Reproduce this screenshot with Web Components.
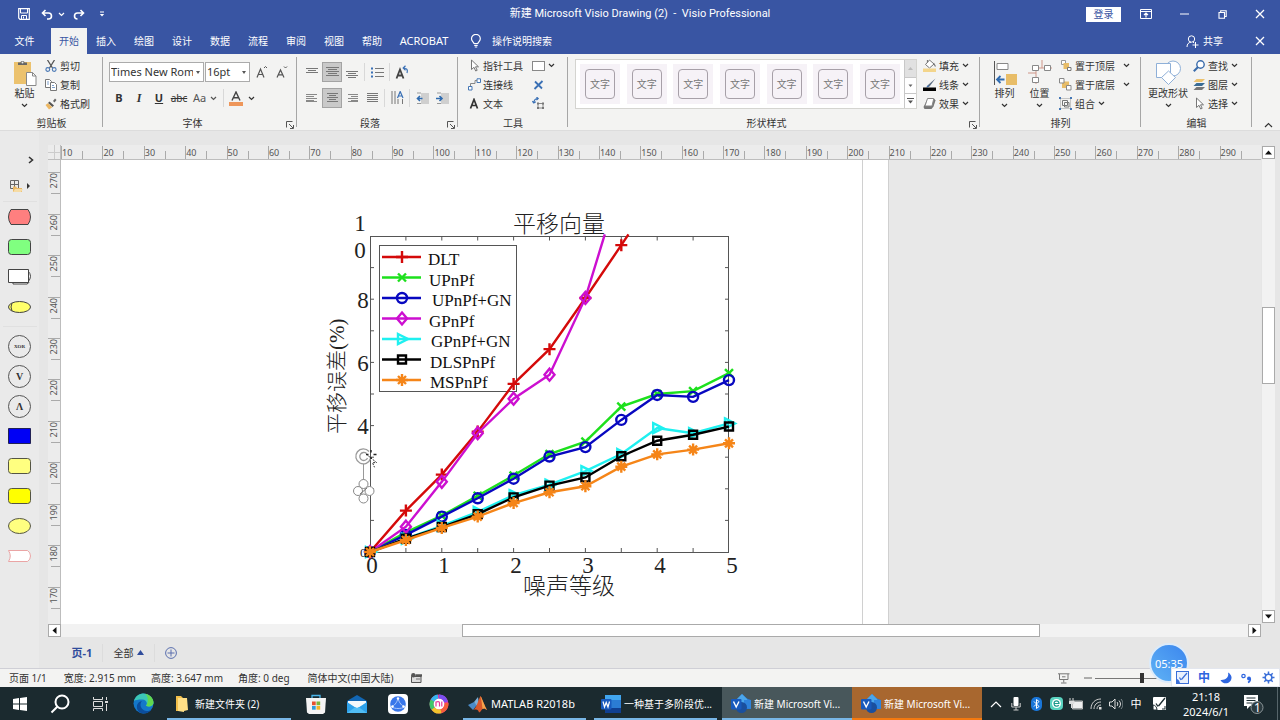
<!DOCTYPE html>
<html lang="zh-CN">
<head>
<meta charset="utf-8">
<title>新建 Microsoft Visio Drawing (2) - Visio Professional</title>
<style>
html,body{margin:0;height:100%}
body{font:10px/14px "Noto Sans","Noto Sans CJK SC",sans-serif;color:#333;overflow:hidden}
</style>
</head>
<body>
<visio-app></visio-app>
<script>
const BASE = `*{box-sizing:border-box}
button{font:inherit;color:inherit;background:none;border:0;padding:0;margin:0;display:flex;align-items:center;justify-content:center;white-space:nowrap}
svg{display:block;flex:none}`;

function define(name, css, render) {
  customElements.define(name, class extends HTMLElement {
    connectedCallback() {
      if (this.shadowRoot) return;
      const root = this.attachShadow({ mode: 'open' });
      root.innerHTML = `<style>${BASE}${css}</style>${render(this)}`;
    }
  });
}

const hatch = (x1, x2, ys, c = '#777') => ys.map((y, i) => {
  const [a, b] = Array.isArray(x1) ? x1[i % x1.length] : [x1, x2];
  return `<path d="M${a} ${y}H${b}" stroke="${c}"/>`;
}).join('');

/* name: [width, height, markup] */
const ICONS = {
  chev: [7, 5, '<path d="M1 1l2.5 2.5L6 1" fill="none" stroke="currentColor" stroke-width="1.2"/>'],
  up: [9, 6, '<path d="M1 5l3.5-3.5L8 5" fill="none" stroke="currentColor" stroke-width="1.2"/>'],
  save: [12, 12, '<path d="M.7.7h10.6v10.6H2L.7 10z" fill="none" stroke="#fff" stroke-width="1.2"/><path d="M2.5 1v4h7V1M3.5 11V7.5h5V11M5.5 8.5v2" fill="none" stroke="#fff"/>'],
  undo: [13, 11, '<path d="M4.5 1L1.5 4l3 3M2 4h5.5a3 3 0 0 1 0 6H6" fill="none" stroke="#fff" stroke-width="1.6"/>'],
  redo: [13, 11, '<path d="M8.500 1l3 3-3 3M11 4H5.500a3 3 0 0 0 0 6" fill="none" stroke="#fff" stroke-width="1.6"/>'],
  more: [6, 6, '<path d="M1 1h4" stroke="#fff"/><path d="M.8 3h4.400L3 5.500z" fill="#fff"/>'],
  ribbonOpt: [12, 10, '<path d="M.5.5h11v9H.5zM.5 2.500h11" fill="none" stroke="#fff"/><path d="M6 8.500V4M4 6l2-2 2 2" fill="none" stroke="#fff" stroke-width="1.200"/>'],
  min: [9, 2, '<path d="M0 1h9" stroke="#fff"/>'],
  restore: [9, 9, '<path d="M1 2.500h5.500V8.200H1zM2.700 2.500V.8H8.200v5.700H6.500" fill="none" stroke="#fff" stroke-width="1.100"/>'],
  close: [10, 10, '<path d="M1 1l8 8M9 1L1 9" stroke="#fff" stroke-width="1.300"/>'],
  bulb: [12, 14, '<path d="M4 9.500C3.500 8 1.500 7 1.500 4.800a4.300 4.300 0 0 1 8.800 0C10.300 7 8.300 8 7.800 9.500zM4.200 11.300h3.500M4.800 13h2.400" fill="none" stroke="#fff" stroke-width="1.200"/>'],
  share: [13, 13, '<circle cx="5.500" cy="4" r="3.200" fill="none" stroke="#fff"/><path d="M1 12c0-3 1.500-4.500 4-4.800M7 7.200l1.200.8M6.500 10h6M9.500 7v6" fill="none" stroke="#fff"/>'],
  paste: [24, 26, '<rect x="1" y="2" width="17" height="22" fill="#ecc26e"/><path d="M5 5V2.500h2.500C7.500.5 11.500.5 11.500 2.500H14V5z" fill="#666"/><circle cx="9.500" cy="2.500" r="1" fill="#eee"/><path d="M13.500 12.500h6l3.500 3.500v9.500h-9.500z" fill="#fff" stroke="#888"/><path d="M19.500 12.500V16H23" fill="none" stroke="#888"/>'],
  cut: [12, 12, '<path d="M2.500 0l5 8M9.500 0l-5 8" stroke="#555" stroke-width="1.300"/><circle cx="2.800" cy="9.500" r="1.900" fill="none" stroke="#4a78b5" stroke-width="1.100"/><circle cx="9.200" cy="9.500" r="1.900" fill="none" stroke="#4a78b5" stroke-width="1.100"/>'],
  copy: [12, 12, '<path d="M.5.5h4l2 2v6h-6z" fill="#fff" stroke="#777"/><path d="M5.500 3.500h4l2 2v6h-6z" fill="#fff" stroke="#777"/><path d="M2 3h2M2 5h2M7 6.500h2M7 8.500h3" stroke="#5b87bd" stroke-width=".8"/>'],
  brush: [12, 12, '<path d="M8 3l2-2.500L11.500 2 9.500 4.500z" fill="#666"/><path d="M4.500 3.500L9 7.500 7.500 9 3 5z" fill="#555"/><path d="M2.800 5.200l4.600 4L4 11.500.5 7z" fill="#ecb763"/>'],
  growA: [12, 14, '<path d="M1 12.500L4.500 4 8 12.500M2.300 9.500h4.400" fill="none" stroke="#555" stroke-width="1.200"/><path d="M8 3l1.500-1.500L11 3" fill="none" stroke="#555"/>'],
  shrinkA: [12, 14, '<path d="M1 12.500L4.500 5 8 12.500M2.300 9.800h4.400" fill="none" stroke="#555" stroke-width="1.200"/><path d="M8 1.500L9.500 3 11 1.500" fill="none" stroke="#555"/>'],
  colorA: [14, 15, '<path d="M3 9.500L7 1l4 8.500M4.500 6.700h5" fill="none" stroke="#444" stroke-width="1.400"/><rect x="0" y="11" width="14" height="4" fill="#ee965a"/>'],
  alT: [13, 13, hatch([[0, 12], [2, 10]], 0, [2.5, 4.5, 6.5], '#777')],
  alM: [13, 13, hatch([[0, 13], [2, 11]], 0, [1.5, 3.5, 5.5, 7.5, 9.5], '#777')],
  alB: [13, 13, hatch([[0, 12], [2, 10]], 0, [5.5, 7.5, 9.5, 11.5], '#777')],
  alL: [13, 13, hatch([[0, 11], [0, 8]], 0, [2.5, 4.5, 6.5, 8.5, 9.5], '#888')],
  alC: [13, 13, hatch([[1, 12], [3, 10]], 0, [1.5, 3.5, 5.5, 7.5, 9.5], '#777')],
  alR: [13, 13, hatch([[2, 12], [5, 12]], 0, [2.5, 4.5, 6.5, 8.5, 9.5], '#888')],
  alJ: [13, 13, hatch(1, 12, [1.5, 3.5, 5.5, 7.5, 9.5], '#777')],
  bullets: [13, 13, hatch(4, 13, [2.5, 6.5, 10.5]) + '<path d="M0 2.500h2M0 6.500h2M0 10.500h2" stroke="#3a70b5" stroke-width="1.800"/>'],
  rotA: [14, 15, '<path d="M1.500 13.500L5 4.500l3.500 9M2.800 10.500h4.400" fill="none" stroke="#444" stroke-width="1.800"/><path d="M12 8c1-3 0-5-3.500-5M10.500.8L8.200 3l2.300 2.200" fill="none" stroke="#3a70b5" stroke-width="1.200"/>'],
  vertA: [13, 14, '<path d="M1 0v13M4 0v13M7 8v5M11.500 8v5" stroke="#777"/><path d="M6.500 7L9.200.5 12 7M7.500 5h3.500" fill="none" stroke="#3a70b5" stroke-width="1.200"/>'],
  outdent: [13, 12, '<rect x="5" y="1" width="8" height="11" fill="#cfcfcf"/><path d="M1 1h4M1 11.500h4" stroke="#999"/><path d="M6.500 6.500h-5M4 4L1.500 6.500 4 9" fill="none" stroke="#2f6bb0" stroke-width="1.600"/>'],
  indent: [13, 12, '<rect x="5" y="1" width="8" height="11" fill="#cfcfcf"/><path d="M1 1h4M1 11.500h4" stroke="#999"/><path d="M0 6.500h5.500M3.500 4L6 6.500 3.500 9" fill="none" stroke="#2f6bb0" stroke-width="1.600"/>'],
  pointer: [12, 13, '<path d="M3.500 1v9.500L6 8.300l1.700 3.700 1.500-.7L7.500 7.800h3z" fill="#fff" stroke="#777"/>'],
  connector: [13, 13, '<path d="M.5 8.500h3.500v3.500H.5zM9 .8h3.500v3.700H9z" fill="#fff" stroke="#4577b5"/><path d="M2.500 8V5.500h4.500V2.500h2" fill="none" stroke="#888"/>'],
  bigA: [12, 12, '<path d="M2.500 10.500L6 1.500l3.500 9M3.800 7.500h4.400" fill="none" stroke="#333" stroke-width="1.700"/>'],
  rect: [13, 10, '<rect x=".5" y=".5" width="12" height="9" fill="#fff" stroke="#888"/>'],
  cross: [13, 10, '<path d="M3 1.500l7 7M10.500 1l-8 8" stroke="#3a70b5" stroke-width="1.800"/>'],
  cropRot: [13, 13, '<path d="M6 6.500h5V11H6z" fill="none" stroke="#888"/><path d="M5 5.500h2v2H5zM10 5.500h2v2h-2zM5 10h2v2H5zM10 10h2v2h-2z" fill="#777"/><path d="M6 1.500C3.500 1.500 1.800 3 1.800 6M.3 4.200L1.800 6l2-1.300M4.500 0L6.200 1.500 4.500 3.200" fill="none" stroke="#3a70b5" stroke-width="1.200"/>'],
  fill: [13, 13, '<path d="M2.500 5.500L6.500 1l4.500 4-4.500 4z" fill="#fff" stroke="#777"/><path d="M4.500 3.500V1M10.500 4l2 3.500" stroke="#777" stroke-width="1.200"/><rect x="0" y="9.500" width="13" height="3.500" fill="#f3d58b"/>'],
  line: [13, 13, '<path d="M12.500.5L6.500 8.500 4 9.500 5 7z" fill="#5a6b80"/><path d="M5 7L3 9.500l3-1z" fill="#3a70b5"/><rect x="0" y="9.500" width="13" height="3.500" fill="#000"/>'],
  effect: [13, 13, '<path d="M4.500 2h7l1 1.500-2 6L8.500 12h-7L.5 10z" fill="#777"/><path d="M4.500 1.500h6.300L9 9H2z" fill="#fff" stroke="#888"/>'],
  arrange: [24, 26, '<path d="M1.500 1v24" stroke="#555"/><path d="M4 3.500h11v6H4z" fill="#fff" stroke="#888"/><rect x="13" y="14" width="11" height="11" fill="#e8bd68"/><path d="M11.500 19.500h-7M7.500 16l-3.500 3.500L7.500 23" fill="none" stroke="#2f6bb0" stroke-width="1.800"/>'],
  position: [24, 26, '<path d="M14 0v8M4 8h20M8 8v16M0 13h8" stroke="#cf9689" fill="none"/><path d="M4.500 5.500h6v5h-6zM16.500 5.500h6v5h-6zM4.500 17.500h6v5h-6z" fill="#fff" stroke="#888"/>'],
  front: [12, 12, '<path d="M1.500.5h4v4h-4z" fill="#fff" stroke="#999"/><rect x="3.500" y="3" width="5.500" height="6" fill="#e8bd68"/><path d="M7.500 7.500h3.500v3h-3.500z" fill="#fff" stroke="#777"/>'],
  back: [13, 13, '<rect x="3" y="3.500" width="7" height="6.500" fill="#e8bd68"/><path d="M.5.5h4.500v4.500H.5zM7.500 7.500H12V12H7.500z" fill="#fff" stroke="#888"/>'],
  group: [13, 13, '<path d="M1.500 1.500h10v10h-10z" fill="none" stroke="#999" stroke-dasharray="1 1"/><path d="M3.500 3.500h5v5h-5zM5.500 5.500h4.500v4.500H5.500z" fill="#fff" fill-opacity=".5" stroke="#777"/><path d="M0 0h2v2H0zM11 0h2v2h-2zM0 11h2v2H0zM11 11h2v2h-2z" fill="#4577b5"/>'],
  change: [26, 26, '<circle cx="18" cy="8.500" r="7.500" fill="#fff" stroke="#8fb0d8"/><path d="M1.500 3.500h14v14h-14z" fill="#fff" stroke="#8fb0d8"/><path d="M13.500 11l7 6.500-7 7-7-7z" fill="#fff" stroke="#8fb0d8"/>'],
  find: [12, 12, '<circle cx="7.500" cy="4.500" r="3.700" fill="#fff" stroke="#3a6cab" stroke-width="1.400"/><path d="M5 7L.8 11.200" stroke="#3a6cab" stroke-width="2"/>'],
  layers: [13, 13, '<path d="M3.500 1H12L9 4H.5z" fill="#ecc26e"/><path d="M3.500 5H12L9 8H.5z" fill="#3a6c95"/><path d="M3.500 9H12L9 12H.5z" fill="#777"/>'],
  launcher: [8, 8, '<path d="M.5 6.500v-6h6M3 3l4 4M7.500 4v3.500H4" fill="none" stroke="#555"/>'],
  stencil: [14, 14, '<path d="M1.500 1.500h8v8h-8zM5.500 1.500v8M1.500 5.500h8" fill="none" stroke="#666"/><path d="M4 13V7.500h3l1 1.500h5V13z" fill="#e9b765"/><path d="M4 13l2-3h8l-2 3z" fill="#f6dca5"/>'],
  flyout: [3, 6, '<path d="M0 0l3 3-3 3z" fill="#333"/>'],
  expand: [6, 8, '<path d="M1 1l3.500 3L1 7" fill="none" stroke="#333" stroke-width="1.600"/>'],
  plus: [12, 12, '<circle cx="6" cy="6" r="5.400" fill="none" stroke="#5a6fae"/><path d="M6 2.500v7M2.500 6h7" stroke="#5a6fae"/>'],
  record: [11, 10, '<path d="M.5 3.500h9.500V9.500H.5z" fill="#ddd" stroke="#555"/><path d="M4.500 2.500H11" stroke="#555" stroke-width="2.500"/><circle cx="2.300" cy="2.300" r="2.200" fill="#555"/><path d="M5 6h4" stroke="#777"/>'],
  present: [12, 11, '<path d="M0 .8h11.500M1.500 1v5.500h8.500V1M5.750 6.500v3M3 10h5.500M4 3.800h3.500" fill="none" stroke="#777"/>'],
  windows: [14, 14, '<path d="M0 2l6-.9V6.500H0zM7 1l7-1v6.500H7zM0 7.500h6v5.400L0 12zM7 7.500h7V14l-7-1z" fill="#fff"/>'],
  search: [20, 20, '<circle cx="12" cy="8" r="6.500" fill="none" stroke="#fff" stroke-width="2"/><path d="M7.300 12.800L1.500 18.500" stroke="#fff" stroke-width="2"/>'],
  taskview: [15, 14, '<path d="M.5 0v2.500h9V0M.5 14v-2.500h9V14M.5 4.500h9v5h-9z" fill="none" stroke="#ddd"/><path d="M13.500 0v3M13.500 7v7" stroke="#ddd"/><path d="M12 5h3" stroke="#ddd" stroke-width="2"/>'],
  edge: [21, 21, '<circle cx="10.500" cy="10.500" r="10" fill="#1477c9"/><path d="M1 8C3 1.500 9-.5 14 1.200c5 1.800 7.500 7 6 10.300-1.500 2.500-5 2.500-7 1.300 2-2.800.2-6.300-3.800-6.300C5 6.500 2 7 1 8z" fill="#3cc7b6"/><path d="M12 .8c5.500.8 9.500 6 8.200 10-1 2.800-5 3.200-7.200 2C16 9 15 3 12 .8z" fill="#62d84e"/><path d="M9 8c-3 3-1.500 9 4.500 10 2 .2 4-.5 5-1.500-3 4.500-9 5-12.500 2.500C2 15 4 8.500 9 8z" fill="#0b4d9c"/>'],
  folder: [12, 18, '<path d="M0 1h5l2 2v13H0z" fill="#f2bf4a"/><path d="M2 3h9l1 12-4 1V17l-6-1z" fill="#ffdf86"/>'],
  store: [20, 20, '<path d="M6 5V1.500h8V5" fill="none" stroke="#4ab5ea" stroke-width="1.300"/><path d="M0 4h20l-1 14.500L17 20H3l-2-1.500z" fill="#f4f4f4"/><path d="M6 7.500h3.700v3.700H6z" fill="#e6502e"/><path d="M10.500 7.500h3.700v3.700h-3.700z" fill="#7db63a"/><path d="M6 12h3.700v3.700H6z" fill="#2f9bdc"/><path d="M10.500 12h3.700v3.700h-3.700z" fill="#f4b62a"/>'],
  mail: [20, 19, '<path d="M0 7l10-6 10 6v12H0z" fill="#1267b4"/><path d="M1 7h18v3l-9 5-9-5z" fill="#f5f8fb"/><path d="M0 8l10 6.500L20 8v11H0z" fill="#2ea1ea"/><path d="M0 19l10-7 10 7z" fill="#51bdf4"/><path d="M2 7h16v1.500l-8 5.500-8-5.500z" fill="#f5f8fb"/>'],
  globe: [20, 20, '<rect width="20" height="20" rx="4" fill="#fff"/><circle cx="10" cy="10" r="7.800" fill="#3977ea"/><path d="M3 13c3-1 6-4 7-9M10 4c1 5 4 8 7 9M3.500 13c4 2 9 2 13.500 0" fill="none" stroke="#a9c6fb"/><circle cx="10" cy="4.500" r="1.200" fill="#fff"/><circle cx="4.500" cy="12.500" r="1.200" fill="#fff"/><circle cx="15.500" cy="12.500" r="1.200" fill="#fff"/>'],
  rainbow: [20, 20, '<circle cx="10" cy="10" r="7.500" fill="#fff" stroke="#e5399c" stroke-width="4"/><path d="M10 2.500A7.500 7.500 0 0 1 17 8" fill="none" stroke="#7a4ef0" stroke-width="4"/><path d="M17.500 9a7.500 7.500 0 0 1-6 8.300" fill="none" stroke="#f55f3a" stroke-width="4"/><path d="M12 17.300a7.500 7.500 0 0 1-8-3" fill="none" stroke="#f2c32c" stroke-width="4"/><path d="M4 14.500A7.500 7.500 0 0 1 3.500 6.500" fill="none" stroke="#3ec86a" stroke-width="4"/><path d="M3.500 6.500A7.500 7.500 0 0 1 9 2.500" fill="none" stroke="#36b5ee" stroke-width="4"/><path d="M7 12.500V8c3-1 3.500 0 3.500 1.500v3M12.800 7.500v5" fill="none" stroke="#e5399c" stroke-width="1.200"/>'],
  matlab: [20, 18, '<path d="M0 10l6-3 3 3-4 5z" fill="#4a8ac6"/><path d="M6 7l4-5 1 7-2 2z" fill="#7eb0d8"/><path d="M5 15C9 13 10 5 12.500 1c2 3 4 10 6.500 14-2-1.500-3-2-4.500-1-1.500 1.500-2 3-3.500 3.500-1-3-2-3.500-6-2.500z" fill="#d9582b"/><path d="M12.500 1c2 3 4 10 6.500 14-2-1.500-3-2-4.500-1C14 9 13.500 5 12.500 1z" fill="#f5a44b"/>'],
  word: [20, 18, '<rect x="4" y="0" width="16" height="18" rx="1" fill="#2b7cd3"/><path d="M4 0h16v5H4z" fill="#41a5ee"/><path d="M4 13h16v5H4z" fill="#103f91"/><rect x="0" y="4" width="10.500" height="10.500" rx="1" fill="#185abd"/><path d="M2 6.500l1.500 5.500L5.200 7.500 7 12l1.500-5.500" fill="none" stroke="#fff" stroke-width="1.200"/>'],
  visio: [20, 20, '<path d="M11 0l5 4.500 4 1.500v9h-5l-5 2-5-11z" fill="#2c79d2"/><path d="M11 0L5.500 5.500 11 11l5.500-5.500z" fill="#4ba6ea"/><path d="M13 6h7v8.500h-7z" fill="#2f83dc"/><circle cx="10.500" cy="13.500" r="5.500" fill="#1a4f9e"/><rect x="0" y="5" width="10.500" height="10.500" rx="1" fill="#185abd"/><path d="M2.500 7.500L5.200 13 8 7.500" fill="none" stroke="#fff" stroke-width="1.400"/>'],
  caret: [12, 8, '<path d="M1 7l5-5 5 5" fill="none" stroke="#fff" stroke-width="1.200"/>'],
  mic: [10, 14, '<rect x="2.500" y="0" width="5" height="9" rx="1" fill="#fff"/><path d="M.8 6v4h8.400V6M5 10v3M2.500 13h5" fill="none" stroke="#ccc"/>'],
  bt: [11, 14, '<rect width="11" height="14" rx="5" fill="#1976d9"/><path d="M3 4.500l5 5-2.500 2v-9L8 4.500l-5 5" fill="none" stroke="#fff"/>'],
  ebox: [13, 13, '<rect width="13" height="13" rx="4" fill="#5ad3c0"/><circle cx="6.500" cy="6.500" r="4.500" fill="#fff"/><path d="M4 6.500h5c0-3.500-5-3.500-5 0 0 3 3.500 3.300 4.800 1.700" fill="none" stroke="#1b9c8d" stroke-width="1.200"/>'],
  battery: [14, 12, '<path d="M4 3.500h9V10.500H4z" fill="#eee"/><path d="M3.500 3h10v8h-10z" fill="none" stroke="#bbb"/><path d="M1 0v2M4 0v2M0 3h5v2.500H0zM2.500 5v5" stroke="#ddd" fill="#ddd"/>'],
  wifi: [12, 12, '<path d="M1 11C1 5 5 1 11 1M4 11c0-4 3-7 7-7M7 11c0-2.500 1.500-4 4-4" fill="none" stroke="#ccc"/><path d="M9 11.500V9h2.500v2.500z" fill="#ddd"/>'],
  volume: [14, 12, '<path d="M.5 4h2.500l3-3v10l-3-3H.5z" fill="none" stroke="#ddd"/><path d="M8 4c1 1 1 3 0 4M10 2.500c2 2 2 5 0 7" fill="none" stroke="#ddd"/><path d="M12 1c2.500 3 2.500 7 0 10" fill="none" stroke="#7b878b"/>'],
  ink: [13, 13, '<rect width="13" height="13" rx="1" fill="#fff"/><path d="M12 1L5.500 9M3 6.500L5 9.500" stroke="#1b2b30" stroke-width="1.300"/><path d="M0 8c2 0 4 2 4 5H0zM12 9v3H9" fill="none" stroke="#1b2b30"/>'],
  inkBlue: [13, 13, '<rect x=".5" y=".5" width="12" height="12" fill="#e9f0fd" stroke="#3b6fd8"/><path d="M11 2L5.500 8.500M3.500 6.500L5 9" stroke="#3b6fd8" stroke-width="1.200"/><path d="M0 8c2.500 0 4 2 4 5H0z" fill="#3b6fd8"/>'],
  moon: [12, 12, '<path d="M8 .5c1.200 4.500-2 8-7.500 7.500C3 13.500 12 12 11.500 5 11 3 10 1.500 8 .5z" fill="#2e66e0"/>'],
  punct: [11, 12, '<circle cx="2.500" cy="4" r="1.700" fill="none" stroke="#2e66e0" stroke-width="1.200"/><circle cx="8" cy="6.500" r="2" fill="#2e66e0"/><path d="M9.300 6.500c.3 2-.8 3.300-2.300 4" fill="none" stroke="#2e66e0" stroke-width="1.500"/>'],
  gear: [13, 13, '<circle cx="6.500" cy="6.500" r="3.300" fill="none" stroke="#3b6fd8" stroke-width="1.600"/><path d="M6.500 .5v2.500M6.500 10v2.500M.5 6.500H3M10 6.500h2.500M2.300 2.300L4 4M9 9l1.700 1.700M2.300 10.700L4 9M9 4l1.700-1.700" stroke="#3b6fd8" stroke-width="1.500"/>'],
  notif: [22, 22, '<path d="M1 2h14v11H7l-3 3v-3H1z" fill="#fff"/><path d="M3.500 5h9M3.500 7.500h9M3.500 10h6" stroke="#1b2b30"/><circle cx="14" cy="14.500" r="6" fill="#2b3a3f" stroke="#8b9598"/><text x="11" y="19" font-size="12" fill="#fff">1</text>'],
  sbUp: [7, 5, '<path d="M0 4.500L3.500.5 7 4.500z" fill="#111"/>'],
  sbDown: [7, 5, '<path d="M0 .5h7L3.500 4.500z" fill="#111"/>'],
  sbLeft: [5, 7, '<path d="M4.500 0v7L.5 3.500z" fill="#111"/>'],
  sbRight: [5, 7, '<path d="M.5 0v7L4.500 3.500z" fill="#111"/>'],
  pageUp: [7, 5, '<path d="M0 5L3.500 0 7 5z" fill="#2f4c9c"/>'],
  galUp: [5, 4, '<path d="M0 3L2.500 0 5 3z" fill="#bbb"/>'],
  galDown: [5, 4, '<path d="M.5.5h4L2.500 3z" fill="#666"/>'],
  galMore: [7, 6, '<path d="M0 .5h7" stroke="#555"/><path d="M1 2.500h5L3.500 5.500z" fill="#555"/>']
};
define('v-icon', ':host{display:block;flex:none}', el => {
  const [w, h, body] = ICONS[el.getAttribute('name')];
  return `<svg width="${w}" height="${h}" viewBox="0 0 ${w} ${h}" aria-hidden="true">${body}</svg>`;
});
const ico = n => `<v-icon name="${n}"></v-icon>`;

/* ---------- title bar and tabs ---------- */
define('title-bar', `
:host{display:grid;grid-template-columns:1fr auto 1fr;height:28px;background:#3955a3;color:#fff;font-size:11px}
.q{display:flex;align-items:center;padding-left:18px}
.q button{height:28px}
.q .s{margin-right:11px}.q .d{width:14px;margin-right:4px}.q .m{margin-left:14px}
h1{font:400 11px/14px Roboto,"Noto Sans CJK SC",sans-serif;margin:0;align-self:center;white-space:pre}
.w{display:flex;justify-content:flex-end;align-items:center;padding-right:1px}
.w button{width:38px;height:28px}
.w .l{width:35px;height:15px;background:#fff;color:#3955a3;margin-right:6px;font-size:10px}`, () => `
<div class="q"><button class="s" aria-label="保存">${ico('save')}</button><button aria-label="撤消">${ico('undo')}</button><button class="d" aria-label="撤消列表">${ico('chev')}</button><button aria-label="恢复">${ico('redo')}</button><button class="m" aria-label="自定义">${ico('more')}</button></div>
<h1>新建 Microsoft Visio Drawing (2)  -  Visio Professional</h1>
<div class="w"><button class="l">登录</button><button aria-label="功能区显示选项">${ico('ribbonOpt')}</button><button aria-label="最小化">${ico('min')}</button><button aria-label="还原">${ico('restore')}</button><button aria-label="关闭">${ico('close')}</button></div>`);

define('ribbon-tabs', `
:host{display:flex;height:26px;background:#3955a3;color:#fff}
button{width:38px;height:26px}
.f{width:49px}.a{width:36px;margin-left:2px;background:#f3f3f2;color:#3955a3}
.acro{width:66px;font-size:11px}.tell{width:auto;gap:10px;margin-left:13px}
.sp{flex:1}.share{width:auto;gap:4px;margin-right:18px}.x{margin-right:1px}`, () => `
<button class="f">文件</button><button class="a">开始</button>${['插入', '绘图', '设计', '数据', '流程', '审阅', '视图', '帮助'].map(t => `<button>${t}</button>`).join('')}<button class="acro">ACROBAT</button><button class="tell">${ico('bulb')}<span>操作说明搜索</span></button>
<span class="sp"></span><button class="share">${ico('share')}<span>共享</span></button><button class="x" aria-label="关闭窗口">${ico('close')}</button>`);

/* ---------- ribbon ---------- */
define('ribbon-group', `
:host{display:flex;flex-direction:column;position:relative;flex:none;height:77px}
:host::after{content:"";position:absolute;right:0;top:3px;bottom:4px;width:1px;background:#a6a6a6}
.b{display:flex;height:62px}
.c{display:block;text-align:center}
:host([launcher]) .c{padding-right:15px}
button{position:absolute;right:3px;bottom:2px}`, el => `
<div class="b"><slot></slot></div><span class="c">${el.getAttribute('caption')}</span>${el.hasAttribute('launcher') ? `<button aria-label="更多选项">${ico('launcher')}</button>` : ''}`);

define('small-button', `
:host{display:block;height:19px}
button{height:19px;gap:3px}
.i{width:var(--icon,12px);display:flex;justify-content:center}
.m{margin-left:var(--menu-gap,0)}`, el => `
<button ${el.hasAttribute('hint') ? `aria-label="${el.getAttribute('hint')}"` : ''}><span class="i">${ico(el.getAttribute('icon'))}</span>${el.hasAttribute('label') ? `<span>${el.getAttribute('label')}</span>` : ''}${el.hasAttribute('menu') ? `<v-icon class="m" name="chev"></v-icon>` : ''}</button>`);

define('large-button', `
:host{display:block}
button{flex-direction:column;width:100%;padding-top:6px}
.c{margin-top:3px}`, el => `
<button>${ico(el.getAttribute('icon'))}<span>${el.getAttribute('label')}</span><v-icon class="c" name="chev"></v-icon></button>`);

define('style-gallery', `
:host{display:flex;flex:1;height:50px;margin-top:5px;border:1px solid #d4d4d0;background:#fff}
ul{list-style:none;margin:0;padding:4px 4px;flex:1;display:flex;justify-content:space-between;align-items:center;overflow:hidden}
li button{width:40px;height:40px;background:#f6f2f7}
li span{width:30px;height:30px;line-height:28px;border:1px solid #a7a0a8;border-radius:4px;color:#777}
nav{width:12px;display:grid;grid-template-rows:18px 16px 1fr}
nav button{border-left:1px solid #c8c8c8;border-bottom:1px solid #c8c8c8}
nav button:first-child{background:#e1e1e1}nav button:last-child{border-bottom:0}`, () => `
<ul>${'<li><button><span>文字</span></button></li>'.repeat(7)}</ul>
<nav><button aria-label="上一行">${ico('galUp')}</button><button aria-label="下一行">${ico('galDown')}</button><button aria-label="其他">${ico('galMore')}</button></nav>`);

define('combo-box', `
:host{display:block;position:relative}
:host::after{content:"";position:absolute;right:4px;top:9px;border:2px solid transparent;border-top:3px solid #555;border-bottom:0;pointer-events:none}
select{appearance:none;width:100%;height:20px;border:1px solid #ababab;border-radius:0;background:#fff;font:inherit;font-size:11px;color:#333;padding:0 10px 0 1px;overflow:hidden;text-overflow:clip;white-space:nowrap}`, el => `
<select aria-label="${el.getAttribute('hint')}"><option>${el.getAttribute('value')}</option></select>`);

define('ribbon-bar', `
:host{display:flex;height:77px;background:#f3f3f2;border-bottom:1px solid #dcdcdc}
.col{padding-top:2px}
.rows{padding:8px 0 0 5px;display:flex;flex-direction:column;gap:6px}
.r{display:flex;height:20px;align-items:center}
.r button{width:20px;height:20px;font-size:11px}
.r .on{background:#c9c9c9;border:1px solid #a3a3a3}
.r i.v{width:1px;height:18px;background:#d8d8d8;margin:0 2px}
.r .aa{width:32px;gap:4px;color:#555}.r .n{width:10px}
.g1{width:103px}.g2{width:194px}.g3{width:161px}.g4{width:110px}.g5{flex:1}.g6{width:161px}.g7{width:111px}
.g1 large-button{width:33px;margin:0 0 0 8px}.g1 .col{margin-left:4px}
.font{padding-left:6px}.face{width:95px;margin-right:1px}.size{width:45px;margin-right:2px}
b{font-weight:700}.r .st{font-size:10px;text-decoration:line-through}
.r .bi{font:italic 700 12px/14px "Liberation Serif",serif}
.tools{width:64px;margin-left:10px}.t2{--icon:13px}
style-gallery{margin-left:7px}
.fx{--icon:13px;width:63px;padding-left:6px}
.g6 large-button{width:35px}.g6 large-button:first-child{margin-left:7px}
.arr{padding-left:2px;--icon:13px}.wide{--menu-gap:5px}
.g7 large-button{width:46px;margin-left:4px}.g7 .col{padding-left:2px}
.tail{flex:none;width:28px;display:flex;justify-content:center;align-items:flex-end;padding:0 0 2px 4px}`, () => `
<ribbon-group class="g1" caption="剪贴板"><large-button icon="paste" label="粘贴"></large-button>
<div class="col"><small-button icon="cut" label="剪切"></small-button><small-button icon="copy" label="复制"></small-button><small-button icon="brush" label="格式刷"></small-button></div></ribbon-group>
<ribbon-group class="g2" caption="字体" launcher><div class="rows font">
<div class="r"><combo-box class="face" hint="字体" value="Times New Roman"></combo-box><combo-box class="size" hint="字号" value="16pt"></combo-box><button aria-label="增大字号">${ico('growA')}</button><button aria-label="减小字号">${ico('shrinkA')}</button></div>
<div class="r"><button><b>B</b></button><button class="bi">I</button><button><b><u>U</u></b></button><button class="st">abc</button><button class="aa">Aa${ico('chev')}</button><i class="v"></i><button aria-label="字体颜色">${ico('colorA')}</button><button class="n" aria-label="颜色列表">${ico('chev')}</button></div></div></ribbon-group>
<ribbon-group class="g3" caption="段落" launcher><div class="rows">
<div class="r"><button aria-label="顶端对齐">${ico('alT')}</button><button class="on" aria-label="中部对齐">${ico('alM')}</button><button aria-label="底端对齐">${ico('alB')}</button><i class="v"></i><button aria-label="项目符号">${ico('bullets')}</button><i class="v"></i><button aria-label="旋转文本">${ico('rotA')}</button></div>
<div class="r"><button aria-label="左对齐">${ico('alL')}</button><button class="on" aria-label="居中">${ico('alC')}</button><button aria-label="右对齐">${ico('alR')}</button><button aria-label="两端对齐">${ico('alJ')}</button><i class="v"></i><button aria-label="文字方向">${ico('vertA')}</button><i class="v"></i><button aria-label="减少缩进">${ico('outdent')}</button><button aria-label="增加缩进">${ico('indent')}</button></div></div></ribbon-group>
<ribbon-group class="g4" caption="工具"><div class="col tools"><small-button icon="pointer" label="指针工具"></small-button><small-button icon="connector" label="连接线"></small-button><small-button icon="bigA" label="文本"></small-button></div>
<div class="col t2"><small-button icon="rect" hint="矩形" menu></small-button><small-button icon="cross" hint="连接点"></small-button><small-button icon="cropRot" hint="文本块"></small-button></div></ribbon-group>
<ribbon-group class="g5" caption="形状样式" launcher><style-gallery></style-gallery>
<div class="col fx"><small-button icon="fill" label="填充" menu></small-button><small-button icon="line" label="线条" menu></small-button><small-button icon="effect" label="效果" menu></small-button></div></ribbon-group>
<ribbon-group class="g6" caption="排列"><large-button icon="arrange" label="排列"></large-button><large-button icon="position" label="位置"></large-button>
<div class="col arr"><small-button class="wide" icon="front" label="置于顶层" menu></small-button><small-button class="wide" icon="back" label="置于底层" menu></small-button><small-button icon="group" label="组合" menu></small-button></div></ribbon-group>
<ribbon-group class="g7" caption="编辑"><large-button icon="change" label="更改形状"></large-button>
<div class="col"><small-button icon="find" label="查找" menu></small-button><small-button icon="layers" label="图层" menu></small-button><small-button icon="pointer" label="选择" menu></small-button></div></ribbon-group>
<div class="tail"><button aria-label="折叠功能区">${ico('up')}</button></div>`);

/* ---------- stencil panel ---------- */
const SHAPES = [
  '<path d="M3 .5h17Q22.500 4 22.500 8T20 15.500H3Q.5 12 .5 8T3 .5z" fill="#ff7f7f" stroke="#444"/>',
  '<rect x=".5" y=".5" width="22" height="15" rx="3" fill="#80ff80" stroke="#444"/>',
  '<path d="M20 2q5 5 0 11M5 13.500v1.500h14q2-1 2-2" fill="#fff" stroke="#444"/><path d="M.5.5h20v13H.5z" fill="#fff" stroke="#444"/>',
  '<ellipse cx="11.500" cy="8" rx="11" ry="5.500" fill="#ffff6b" stroke="#444"/><path d="M4 4q-2 4 0 8" fill="none" stroke="#444"/>',
  null, 'XOR', 'V', 'Λ',
  '<path d="M.5.5h22v15H.5z" fill="#0000f5" stroke="#225"/>',
  '<rect x=".5" y=".5" width="22" height="15" rx="3" fill="#ffff80" stroke="#554"/>',
  '<rect x=".5" y=".5" width="22" height="15" rx="3" fill="#ffff00" stroke="#554"/>',
  '<ellipse cx="11.500" cy="8" rx="11" ry="7.500" fill="#ffff80" stroke="#554"/>',
  '<path d="M.5 2.500h19q3 2 3 5.500t-3 5.500H.5Q4 8 .5 2.500z" fill="#fff" stroke="#eaa5a5"/>'
];
define('stencil-panel', `
:host{display:flex;flex-direction:column;align-items:center;width:39px;background:#eaeaea;padding-top:16px}
button{width:100%;height:30px;flex:none}
.e{height:26px;justify-content:flex-end;padding-right:5px}
.s{height:26px;gap:4px;padding-right:1px}
hr{width:34px;margin:2px 0 0;border:0;border-top:1px solid #e0e0e0;flex:none}
hr.m{margin:4px 0}
.k{font:700 7px/21px "Liberation Serif",serif;width:23px;height:23px;border:1px solid #555;border-radius:50%;text-align:center}
.x{font-size:5px}.v{font-size:10px;font-weight:700}`, () => `
<button class="e" aria-label="展开形状窗口">${ico('expand')}</button><button class="s" aria-label="更多形状">${ico('stencil')}${ico('flyout')}</button><hr>
${SHAPES.map(s => s === null ? '<hr class="m">' : s[0] === '<' ? `<button aria-label="形状"><svg width="23" height="16" viewBox="0 0 23 16">${s}</svg></button>` : `<button><span class="k ${s.length > 1 ? 'x' : 'v'}">${s}</span></button>`).join('')}`);

/* ---------- rulers ---------- */
define('h-ruler', `
:host{display:flex;height:15px;background:#ececec;border-bottom:1px solid #bdbdbd;color:#555}
span{flex:1;min-width:0;border-left:1px solid #aaa;line-height:13px;font-size:9px;position:relative;margin-top:1px}
span::after{content:"";position:absolute;left:20px;bottom:0;width:1px;height:8px;background:#aaa}`,
  () => Array.from({ length: 29 }, (_, i) => `<span>${10 + i * 10}</span>`).join(''));

define('v-ruler', `
:host{display:flex;flex-direction:column;width:14px;background:#ececec;border-right:1px solid #bdbdbd;color:#555;overflow:hidden}
i{flex:3 1 0}
span{flex:10 1 0;min-height:0;border-top:1px solid #aaa;position:relative}
span:last-child{flex-grow:9}
b{font-weight:400;display:block;writing-mode:vertical-rl;transform:rotate(180deg);font-size:9px;line-height:12px}
span::after{content:"";position:absolute;top:20px;right:0;width:9px;height:1px;background:#aaa}`,
  () => '<i></i>' + Array.from({ length: 11 }, (_, i) => `<span><b>${270 - i * 10}</b></span>`).join(''));

/* ---------- chart ---------- */
const SERIES = [
  { name: 'DLT', color: '#d40a0a', mark: 'plus', lx: 428, v: [0, 1.31, 2.45, 3.81, 5.32, 6.42, 8.04, 9.71], end: [3.6, 10.05] },
  { name: 'UPnPf', color: '#1de01d', mark: 'x', lx: 429, v: [0, .62, 1.15, 1.78, 2.42, 3.1, 3.49, 4.6, 5, 5.09, 5.66] },
  { name: 'UPnPf+GN', color: '#0808c0', mark: 'circle', lx: 432, v: [0, .54, 1.12, 1.7, 2.32, 3.02, 3.32, 4.18, 4.97, 4.91, 5.44] },
  { name: 'GPnPf', color: '#cc0fd0', mark: 'diamond', lx: 429, v: [0, .8, 2.22, 3.76, 4.85, 5.61, 8.04], end: [3.27, 10.05] },
  { name: 'GPnPf+GN', color: '#1ff0f0', mark: 'tri', lx: 431, v: [0, .42, .83, 1.27, 1.8, 2.13, 2.56, 3.1, 3.92, 3.76, 4.07] },
  { name: 'DLSPnPf', color: '#000000', mark: 'square', lx: 430, v: [0, .42, .79, 1.2, 1.73, 2.1, 2.36, 3.03, 3.52, 3.71, 3.97] },
  { name: 'MSPnPf', color: '#f58518', mark: 'star', lx: 430, v: [0, .38, .76, 1.12, 1.55, 1.89, 2.08, 2.7, 3.09, 3.24, 3.44] }
];
const MARKS = {
  plus: 'M-6 0H6M0-6V6', x: 'M-4-4L4 4M4-4L-4 4', circle: 'M-5 0a5 5 0 1 0 10 0a5 5 0 1 0-10 0',
  diamond: 'M0-6L5 0L0 6L-5 0z', tri: 'M-4-5L6 0L-4 5z', square: 'M-4-4H4V4H-4z', star: 'M-6 0H6M0-6V6M-4-4L4 4M4-4L-4 4'
};
define('error-chart', `
:host{display:block}
text{font-family:"Liberation Serif","Noto Sans CJK SC",serif;fill:#222}
.n{font-size:23px;text-anchor:middle}.t{font-size:23px;font-weight:300}.y{font-size:21px;font-weight:300}.l{font-size:17px;fill:#111}
.s{fill:none;stroke-width:2.4}.k{fill:none;stroke:#555}`, () => {
  const X = v => 370 + v * 71.8, Y = v => 552 - v * 31.6;
  const mark = (s, x, y) => `<path class="s" stroke="${s.color}" d="${MARKS[s.mark]}" transform="translate(${x} ${y})"/>`;
  let ticks = '';
  for (let v = 1; v < 10; v++) {
    const x = X(v / 2), y = Y(v);
    ticks += `M${x} 552v-4M${x} 236.500v4M370 ${y}h4M729 ${y}h-4`;
  }
  const lines = SERIES.map(s => {
    const pts = s.v.map((v, i) => [X(i / 2), Y(v)]);
    const all = s.end ? [...pts, [X(s.end[0]), Y(s.end[1])]] : pts;
    return `<polyline class="s" stroke="${s.color}" points="${all.join(' ')}"/>` + pts.map(p => mark(s, ...p)).join('');
  }).join('');
  const legend = SERIES.map((s, i) => {
    const y = 257 + i * 20.5;
    return `<path class="s" stroke="${s.color}" d="M382 ${y}H421"/>${mark(s, 402, y)}<text class="l" x="${s.lx}" y="${y + 8}">${s.name}</text>`;
  }).join('');
  const num = [[360, 231, 1], [360, 258, 0], [363, 308, 8], [363, 371, 6], [363, 434, 4]].concat([0, 1, 2, 3, 4, 5].map(v => [372 + v * 72, 573, v]));
  return `<svg width="420" height="400" viewBox="320 205 420 400" role="img" aria-label="平移误差随噪声等级的变化">
<rect class="k" x="370.500" y="236.500" width="358" height="316"/><path class="k" d="${ticks}"/>
<rect class="k" x="379.500" y="245.500" width="137" height="146"/>
<text x="360" y="557" style="font-size:13px">0</text>
${legend}${lines}
${num.map(([x, y, t]) => `<text class="n" x="${x}" y="${y}">${t}</text>`).join('')}
<text class="t" x="513" y="232">平移向量</text><text class="t" x="523" y="594">噪声等级</text>
<text class="y" transform="translate(344 434) rotate(-90)">平移误差(%)</text>
<g fill="none" stroke="#999"><path d="M363.500 464v16"/><path d="M369 451.500a7.500 7.500 0 1 0 1.500 7M366.500 453.500a4 4 0 1 0 1 4.500" stroke-width="1.300"/></g>
<g fill="#fff" stroke="#888"><circle cx="363.500" cy="484" r="4.500"/><circle cx="363.500" cy="498.500" r="4.500"/><circle cx="358" cy="491" r="4.500"/><circle cx="369.500" cy="491" r="4.500"/></g>
<path d="M360 494l7-6" stroke="#777"/>
<path d="M366 454l10.500 8.500-4 .3 2 4.500" fill="none" stroke="#333" stroke-dasharray="2 1"/><path d="M371 450v2.500M366 454.500h2.500M373.500 454.500h3M371 457v2" stroke="#222" stroke-width="1.400"/></svg>`;
});

define('drawing-canvas', `
:host{display:block;position:relative;background:#e8e8e8;overflow:hidden}
.p{width:69%;height:100%;background:#fff;border-right:1px solid #d0d0d0}
.m{height:100%;margin-right:25px;border-right:1px solid #d0d0d0}
error-chart{position:absolute;left:259px;top:45px}`, () => '<div class="p"><div class="m"></div></div><error-chart></error-chart>');

define('scroll-bar', `
:host{display:flex;background:#f2f2f2}
:host([vertical]){flex-direction:column;width:13px}
:host(:not([vertical])){height:13px}
button{flex:none;width:13px;height:13px;background:#fff;border:1px solid #aaa}
.a{flex:var(--before) 1 0}.t{flex:var(--thumb) 1 0;background:#fff;border:1px solid #aaa}.z{flex:var(--after) 1 0}`, el => {
  const v = el.hasAttribute('vertical');
  return `<button aria-label="后退">${ico(v ? 'sbUp' : 'sbLeft')}</button><span class="a"></span><span class="t"></span><span class="z"></span><button aria-label="前进">${ico(v ? 'sbDown' : 'sbRight')}</button>`;
});

define('page-tabs', `
:host{display:flex;align-items:center;height:31px;padding-left:15px}
button{height:18px}
.p{width:40px;padding-right:1px;color:#2f4c9c;font-size:11px;font-weight:700;border-right:1px solid #dcdcdc}
.a{width:52px;gap:3px;border-right:1px solid #dcdcdc}
.n{width:31px}`, () => `<button class="p">页-1</button><button class="a">全部${ico('pageUp')}</button><button class="n" aria-label="插入页">${ico('plus')}</button>`);

define('work-space', `
:host{display:flex;flex:1;min-height:0;background:#e6e6e6}
.main{flex:1;min-width:0;margin-left:9px;display:flex;flex-direction:column;padding-top:14px}
.g{flex:1;min-height:0;display:grid;grid-template:15px 1fr 13px/13px 1fr 19px}
.corner{background:linear-gradient(#ccc,#ccc) 6px 0/1px 100% no-repeat,linear-gradient(#ccc,#ccc) 0 7px/100% 1px no-repeat,#ececec;border-bottom:1px solid #bdbdbd;border-right:1px solid #bdbdbd}
v-ruler{width:13px}
.vs{grid-column:3;grid-row:1/3;margin:1px 0 1px 1px;--before:148;--thumb:75;--after:227}
.hs{grid-column:1/3;--before:402;--thumb:577;--after:208}`, () => `
<stencil-panel></stencil-panel>
<div class="main"><div class="g"><div class="corner"></div><h-ruler></h-ruler><scroll-bar class="vs" vertical></scroll-bar><v-ruler></v-ruler><drawing-canvas></drawing-canvas><scroll-bar class="hs"></scroll-bar></div><page-tabs></page-tabs></div>`);

/* ---------- status bar with floating tools ---------- */
define('ime-bar', `
:host{display:flex;align-items:center;width:109px;height:19px;background:#fff;border:1px solid #e3e6ee}
button{flex:1;height:17px}.z{color:#2e66e0;font-size:12px;font-weight:700}`, () => `
<button aria-label="输入法">${ico('inkBlue')}</button><button class="z">中</button><button aria-label="半角">${ico('moon')}</button><button aria-label="标点">${ico('punct')}</button><button aria-label="设置">${ico('gear')}</button>`);

define('status-bar', `
:host{display:flex;align-items:center;height:19px;background:#f3f3f2;border-top:1px solid #cfcfd6;position:relative;padding-left:9px;white-space:nowrap}
.w{margin:0 15px 0 17px}.l{margin:0 18px 0 15px}.m{margin-left:17px}
.r{margin-left:auto;display:flex;align-items:center;margin-right:91px}
.r button{height:16px}.p{margin-right:14px}.o{margin-right:3px}
input{appearance:none;width:94px;height:12px;margin:0;background:linear-gradient(#777,#777) center/100% 1px no-repeat}
input::-webkit-slider-thumb{appearance:none;width:4px;height:10px;background:#333}
ime-bar{position:absolute;right:0;bottom:0}
.t{position:absolute;right:91px;bottom:4px;width:40px;height:40px;border-radius:50%;border:2px solid #dcebfa;background:linear-gradient(225deg,#3b86ee,#5fb2f5);color:#fff;font-size:11px;line-height:37px;text-align:center}`, () => `
<span>页面 1/1</span><span class="w">宽度: 2.915 mm</span><span>高度: 3.647 mm</span><span class="l">角度: 0 deg</span><span>简体中文(中国大陆)</span><button class="m" aria-label="宏录制">${ico('record')}</button>
<div class="r"><button class="p" aria-label="演示模式">${ico('present')}</button><button class="o" aria-label="缩小"><svg width="8" height="2"><path d="M0 1h8" stroke="#666"/></svg></button><input type="range" aria-label="缩放" min="0" max="100" value="50"></div>
<div class="t">05:35</div><ime-bar></ime-bar>`);

/* ---------- taskbar ---------- */
define('task-button', `
:host{display:block;height:33px;position:relative}
button{width:100%;height:33px;gap:var(--gap,3px);justify-content:flex-start;padding-left:var(--pad,5px)}
:host([active]){background:#48575b}
:host([alert]){background:#a8672f}
:host([label])::after{content:"";position:absolute;left:0;right:0;bottom:0;height:2px;background:#78b6e6}
:host([alert])::after{background:#f4790f}
:host(:not([label])) button{justify-content:center;padding:0}`, el => {
  const l = el.getAttribute('label');
  return `<button ${l ? '' : `aria-label="${el.getAttribute('hint')}"`}>${ico(el.getAttribute('icon'))}${l ? `<span>${l}</span>` : ''}</button>`;
});

define('task-bar', `
:host{display:flex;height:33px;background:#1b2a2f;color:#fff;font-size:11px}
.i{width:40px}.e{width:47px}.j{width:41px}
.f{width:124px;font-size:10px;--pad:9px;--gap:7px;margin-right:4px}
.ml{width:123px;margin:0 8px 0 4px}.wd{width:123px;margin-right:5px;font-size:10px}
.vs{width:130px;font-size:10px}.wd,.vs{--pad:7px}.vs{--pad:9px}
.tray{margin-left:auto;display:flex;align-items:center}
.tray button{width:20px;height:33px}.tray .z{font-size:11px}.tray .k{width:26px}
.tray .c{width:68px;flex-direction:column;line-height:15px}
.tray .n{width:28px}.end{width:1px;height:33px;background:#56656a;margin:0 2px 0 9px}`, () => `
<task-button class="i" icon="windows" hint="开始"></task-button><task-button class="i" icon="search" hint="搜索"></task-button><task-button class="i" icon="taskview" hint="任务视图"></task-button><task-button class="e" icon="edge" hint="Edge"></task-button>
<task-button class="f" icon="folder" label="新建文件夹 (2)"></task-button>
<task-button class="j" icon="store" hint="商店"></task-button><task-button class="j" icon="mail" hint="邮件"></task-button><task-button class="j" icon="globe" hint="浏览器"></task-button><task-button class="j" icon="rainbow" hint="应用"></task-button>
<task-button class="ml" icon="matlab" label="MATLAB R2018b"></task-button><task-button class="wd" icon="word" label="一种基于多阶段优..."></task-button><task-button class="vs" icon="visio" label="新建 Microsoft Vi..." active></task-button><task-button class="vs" icon="visio" label="新建 Microsoft Vi..." alert></task-button>
<div class="tray">${['caret', 'mic', 'bt', 'ebox', 'battery', 'wifi', 'volume'].map(n => `<button aria-label="${n}">${ico(n)}</button>`).join('')}<button class="z">中</button><button class="k" aria-label="手写">${ico('ink')}</button><button class="c"><span>21:18</span><span>2024/6/1</span></button><button class="n" aria-label="通知">${ico('notif')}</button><i class="end"></i></div>`);

define('visio-app', ':host{display:flex;flex-direction:column;height:100vh}',
  () => '<title-bar></title-bar><ribbon-tabs></ribbon-tabs><ribbon-bar></ribbon-bar><work-space></work-space><status-bar></status-bar><task-bar></task-bar>');
</script>
</body>
</html>
